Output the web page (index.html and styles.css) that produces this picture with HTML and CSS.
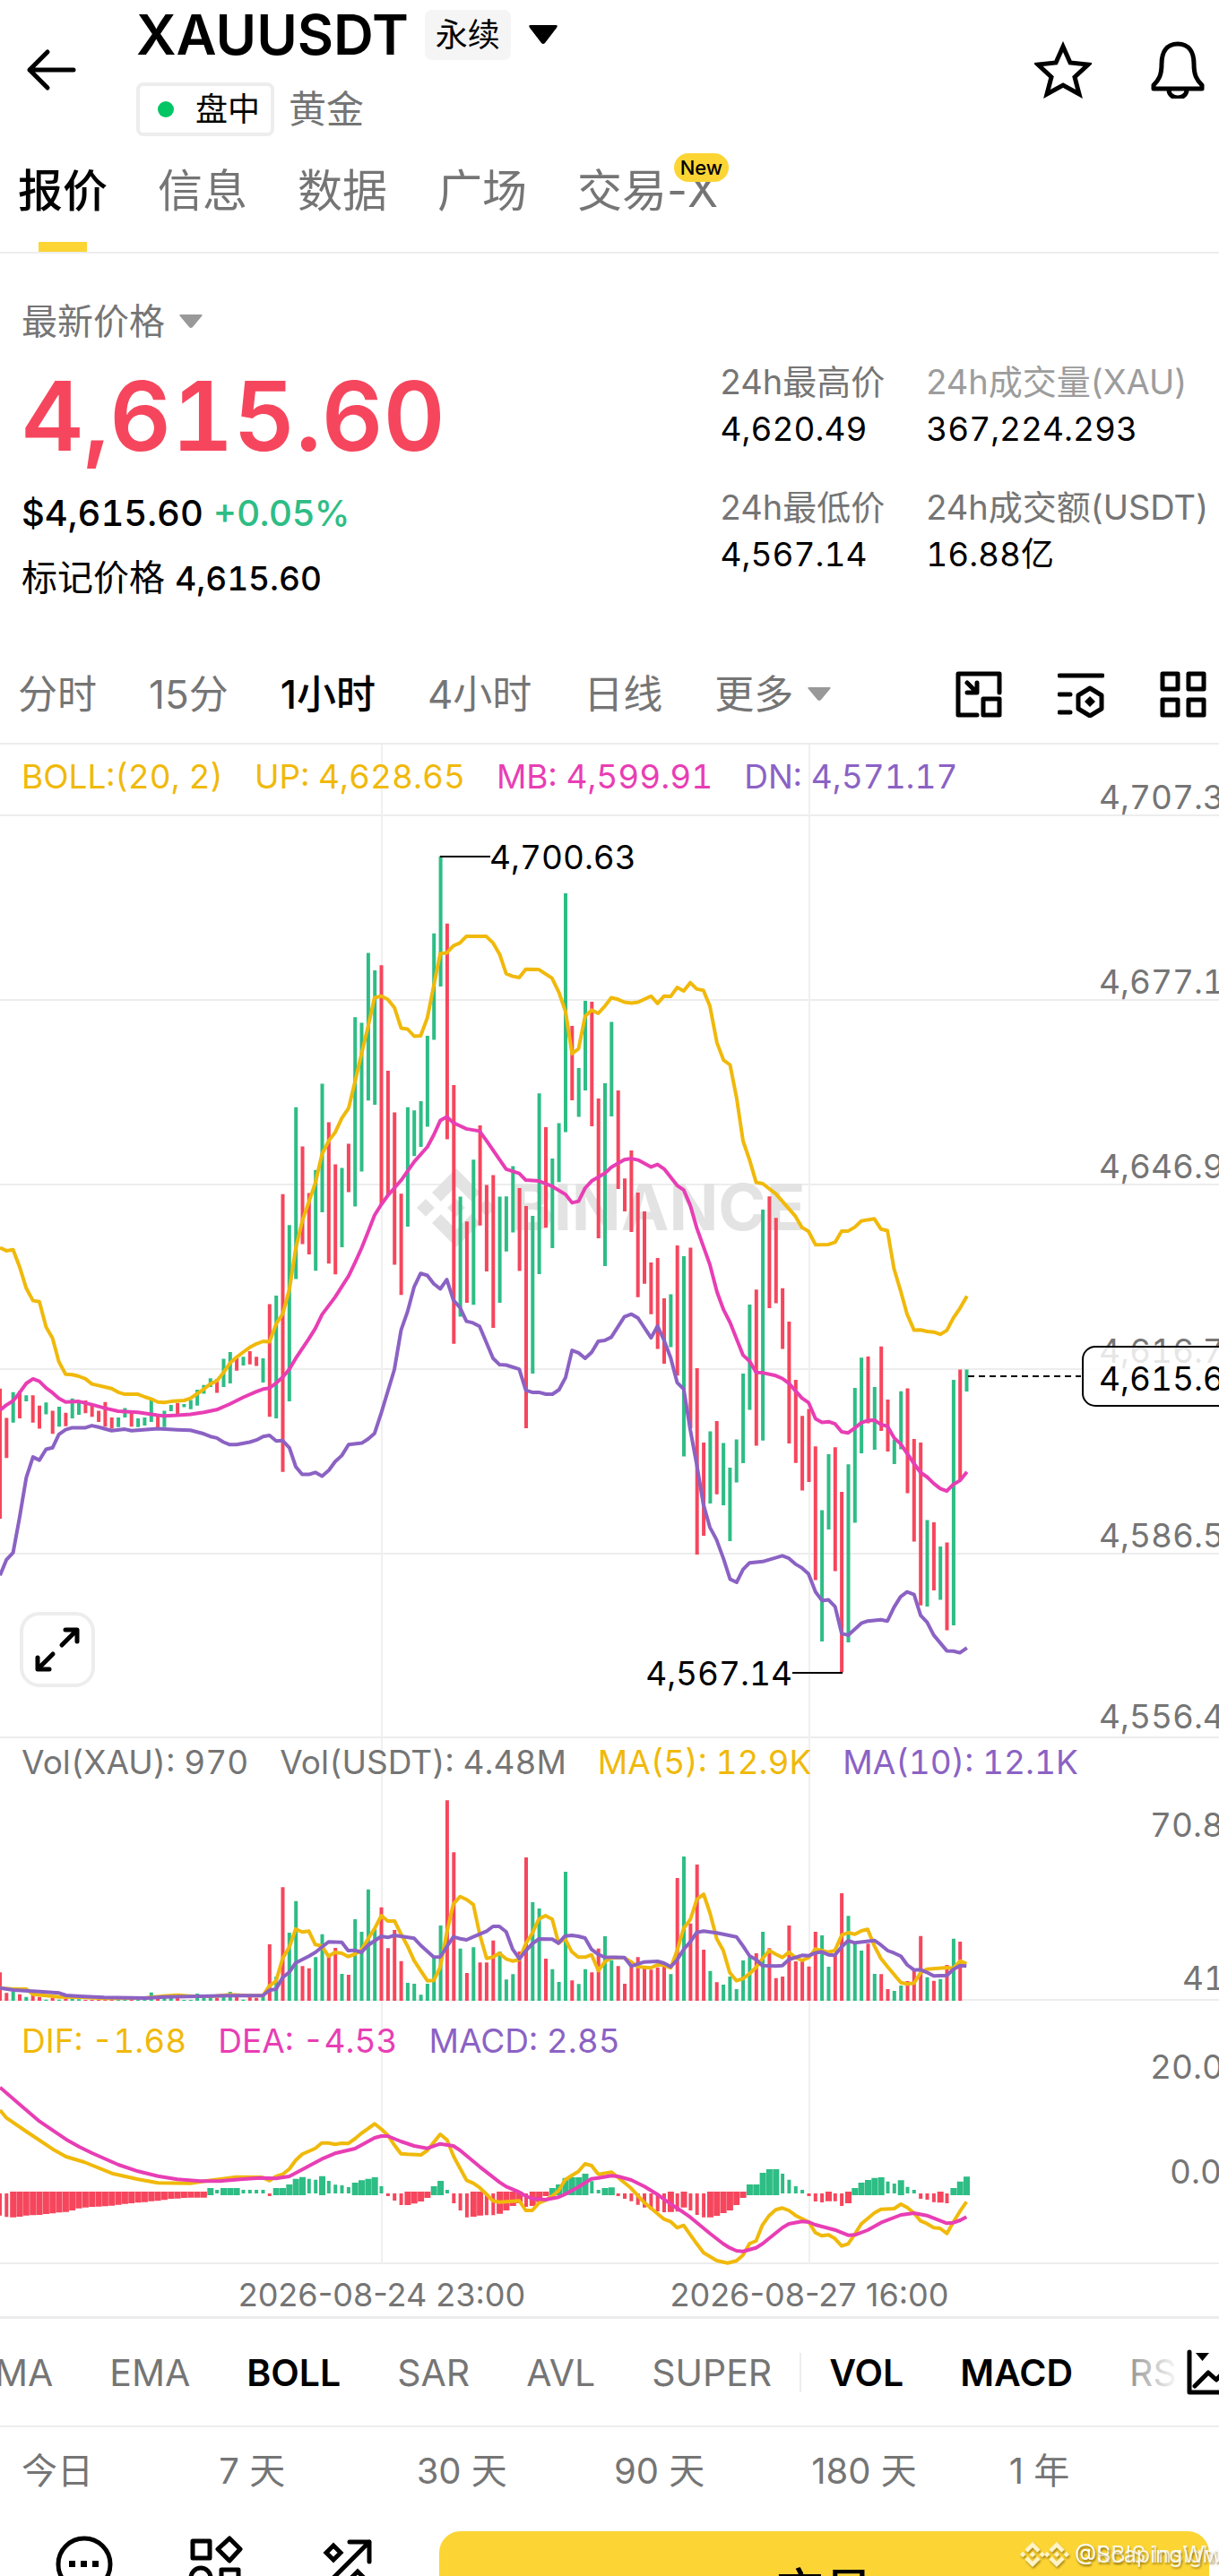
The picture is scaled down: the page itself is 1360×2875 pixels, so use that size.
FILE: index.html
```html
<!DOCTYPE html>
<html lang="zh-CN">
<head>
<meta charset="utf-8">
<meta name="viewport" content="width=device-width, initial-scale=1">
<title>XAUUSDT 永续</title>
<link rel="stylesheet" href="styles.css">
</head>
<body>
<svg width="0" height="0" class="defs" aria-hidden="true">
  <symbol id="brand" viewBox="0 0 24 24"><path d="M16.624 13.9202l2.7175 2.7154-7.353 7.353-7.353-7.352 2.7175-2.7164 4.6355 4.6595 4.6356-4.6595zm4.6366-4.6366L24 12l-2.7154 2.7164L18.5682 12l2.6924-2.7164zm-9.272.001l2.7163 2.6914-2.7164 2.7174v-.001L9.2721 12l2.7164-2.7154zm-9.2722-.001L5.4088 12l-2.6914 2.6924L0 12l2.7164-2.7164zM11.9885.0115l7.353 7.329-2.7174 2.7154-4.6356-4.6356-4.6355 4.6595-2.7174-2.7154 7.353-7.353z"/></symbol>
</svg>
<div class="app">
  <header class="header">
    <button class="icon-btn back" aria-label="返回">
      <svg width="60" height="48" viewBox="0 0 60 48" class="line"><path d="M25 4 5 24l20 20M5 24h49"/></svg>
    </button>
    <div class="pair">
      <div class="pair-top">
        <h1 class="symbol">XAUUSDT</h1>
        <span class="tag">永续</span>
        <button class="icon-btn" aria-label="切换交易对"><svg width="32" height="22" viewBox="0 0 32 22"><path d="M2 0h28q3 0 1 3L18 20q-2 2-4 0L1 3q-2-3 1-3z"/></svg></button>
      </div>
      <div class="pair-sub">
        <span class="status"><i class="dot"></i>盘中</span>
        <span class="alias">黄金</span>
      </div>
    </div>
    <div class="actions">
      <button class="icon-btn" aria-label="收藏"><svg width="64" height="64" viewBox="0 0 64 64" class="line miter"><path d="M32 6l8 18 20 2-15 14 5 19-18-10-18 10 5-19L4 26l20-2z"/></svg></button>
      <button class="icon-btn" aria-label="提醒"><svg width="64" height="64" viewBox="0 0 64 64" class="line"><path d="M32 3C19 3 14 13 14 25c0 13-3 18-9 24v4h54v-4c-6-6-9-11-9-24C50 13 45 3 32 3z"/><path d="M22 54c0 12 20 12 20 0"/></svg></button>
    </div>
  </header>

  <nav class="tabs">
    <a href="#quote" class="tab active">报价</a>
    <a href="#info" class="tab">信息</a>
    <a href="#data" class="tab">数据</a>
    <a href="#square" class="tab">广场</a>
    <a href="#tradex" class="tab">交易-X<span class="new">New</span></a>
  </nav>

  <section class="quote">
    <div class="quote-main">
      <button class="price-type">最新价格 <svg width="26" height="16" viewBox="0 0 26 16"><path d="M2 0h22q3 0 1 2L15 14q-2 2-4 0L1 2q-2-2 1-2z"/></svg></button>
      <div class="price">4,615.60</div>
      <div class="fiat">$4,615.60 <span class="up">+0.05%</span></div>
      <div class="mark">标记价格 <span class="mark-num">4,615.60</span></div>
    </div>
    <dl class="stats">
      <div class="stat"><dt>24h最高价</dt><dd>4,620.49</dd></div>
      <div class="stat"><dt class="pale">24h成交量(XAU)</dt><dd>367,224.293</dd></div>
      <div class="stat"><dt>24h最低价</dt><dd>4,567.14</dd></div>
      <div class="stat"><dt>24h成交额(USDT)</dt><dd>16.88亿</dd></div>
    </dl>
  </section>

  <div class="intervals">
    <button class="interval">分时</button>
    <button class="interval">15分</button>
    <button class="interval active">1小时</button>
    <button class="interval">4小时</button>
    <button class="interval">日线</button>
    <button class="interval more">更多 <svg width="26" height="16" viewBox="0 0 26 16"><path d="M2 0h22q3 0 1 2L15 14q-2 2-4 0L1 2q-2-2 1-2z"/></svg></button>
    <div class="tools">
      <button class="icon-btn" aria-label="小窗"><svg width="52" height="52" viewBox="0 0 52 52" class="line"><path d="M24 49H3V3h46v21"/><path d="M31 31h18v18H31zM13 13l10 10M24 13v11H13"/></svg></button>
      <button class="icon-btn" aria-label="指标设置"><svg width="52" height="52" viewBox="0 0 52 52" class="line"><path d="M2 5h48M2 26h12M2 46h12M36 19l13 8v15l-13 8-13-8V27z"/><path class="solid" d="M36 28l6 6-6 6-6-6z"/></svg></button>
      <button class="icon-btn" aria-label="布局"><svg width="52" height="52" viewBox="0 0 52 52" class="line"><path d="M3 3h17v17H3zM32 3h17v17H32zM3 32h17v17H3zM32 32h17v17H32z"/></svg></button>
    </div>
  </div>

  <section class="pane pane-price">
    <div class="legend">
      <span class="c-yellow">BOLL:(20, 2)</span><span class="c-yellow">UP: 4,628.65</span><span class="c-pink">MB: 4,599.91</span><span class="c-purple">DN: 4,571.17</span>
    </div>
    <svg id="price" class="chart" viewBox="0 0 1360 1109" role="img" aria-label="K线图"></svg>
    <button class="expand" aria-label="全屏"><svg width="50" height="50" viewBox="0 0 50 50" class="line"><path d="M30 20 46 4M34 3h13v13M20 30 4 46M3 34v13h13"/></svg></button>
  </section>
  <section class="pane">
    <div class="legend">
      <span>Vol(XAU): 970</span><span>Vol(USDT): 4.48M</span><span class="c-yellow">MA(5): 12.9K</span><span class="c-purple">MA(10): 12.1K</span>
    </div>
    <svg id="volume" class="chart" viewBox="0 0 1360 293" role="img" aria-label="成交量"></svg>
  </section>
  <section class="pane">
    <div class="legend legend-macd">
      <span class="c-yellow">DIF: -1.68</span><span class="c-pink">DEA: -4.53</span><span class="c-purple">MACD: 2.85</span>
    </div>
    <svg id="macd" class="chart" viewBox="0 0 1360 352" role="img" aria-label="MACD"></svg>
  </section>

  <div class="indicators">
    <div class="indicator-list">
      <button class="ind">MA</button>
      <button class="ind">EMA</button>
      <button class="ind active">BOLL</button>
      <button class="ind">SAR</button>
      <button class="ind">AVL</button>
      <button class="ind">SUPER</button>
      <span class="sep"></span>
      <button class="ind active">VOL</button>
      <button class="ind active">MACD</button>
      <button class="ind">RSI</button>
    </div>
    <button class="icon-btn ind-more" aria-label="更多指标"><svg width="56" height="52" viewBox="0 0 56 52" class="line"><path d="M3 3v45h50M9 41l15-15 9 8 16-17"/><path class="fill" d="M10 4h15l-7.500 9z"/></svg></button>
  </div>

  <div class="ranges">
    <button class="range">今日</button>
    <button class="range">7 天</button>
    <button class="range">30 天</button>
    <button class="range">90 天</button>
    <button class="range">180 天</button>
    <button class="range">1 年</button>
  </div>

  <footer class="bottom">
    <div class="shortcuts">
      <button class="icon-btn" aria-label="聊天"><svg width="64" height="64" viewBox="0 0 64 64" class="line"><circle cx="32" cy="32" r="29"/><path class="fill" d="M15 28h7v7h-7zM28 28h7v7h-7zM41 28h7v7h-7z"/></svg></button>
      <button class="icon-btn" aria-label="功能"><svg width="64" height="64" viewBox="0 0 64 64" class="line"><path d="M5 6h19v19H5zM46 3l12 12-12 13-13-13zM37 38h19v19H37z"/><circle cx="14" cy="47" r="11"/></svg></button>
      <button class="icon-btn" aria-label="合约"><svg width="64" height="64" viewBox="0 0 64 64" class="line"><path d="M32 7h22v22M54 7 5 56"/><path class="miter" d="M14 11l8 8-8 8-8-8zM41 40l8 8-8 8-8-8z"/></svg></button>
    </div>
    <button class="trade">交易</button>
    <div class="credit" aria-hidden="true">
      <span class="credit-line first"><svg width="28" height="28"><use href="#brand"/></svg><span>@RBIS Insight</span></span>
      <span class="credit-line second"><svg width="28" height="28"><use href="#brand"/></svg><span>@ScapingWw</span></span>
    </div>
  </footer>
</div>
<script src="chart.js"></script>
</body>
</html>
```

FILE: styles.css
```css
* { box-sizing: border-box; }

body {
  margin: 0;
  background: #fff;
  color: #000;
  font-family: Inter, "Noto Sans CJK SC", sans-serif;
}

button {
  margin: 0;
  padding: 0;
  border: 0;
  background: none;
  color: inherit;
  font: inherit;
  white-space: nowrap;
}

a { color: inherit; text-decoration: none; }
svg { display: block; }

.defs { position: absolute; }

.app {
  position: relative;
  height: 100vh;
  overflow: hidden;
}

.line {
  fill: none;
  stroke: #000;
  stroke-width: 5;
  stroke-linecap: round;
  stroke-linejoin: round;
}
.line.miter, .line .miter { stroke-linejoin: miter; }
.line .fill { fill: #000; stroke: none; }
.line .solid { fill: #000; stroke: none; }

/* Header */
.header {
  display: flex;
  align-items: center;
  padding: 3px 14px 0 28px;
}
.pair { margin-left: 64px; padding-top: 8px; }
.pair-top, .pair-sub { display: flex; align-items: center; }
.pair-top { height: 56px; }
.symbol {
  margin: 0;
  font-size: 62px;
  font-weight: 600;
  line-height: 58px;
}
.tag {
  margin: 0 20px 0 18px;
  padding: 0 12px;
  border-radius: 8px;
  background: #f5f5f5;
  font-size: 36px;
  line-height: 56px;
}
.pair-sub { margin-top: 25px; gap: 16px; }
.status {
  display: flex;
  align-items: center;
  gap: 24px;
  padding: 0 12px 0 20px;
  border: 4px solid #ededed;
  border-radius: 8px;
  font-size: 36px;
  line-height: 52px;
}
.dot { width: 18px; height: 18px; border-radius: 50%; background: #02c564; }
.alias { color: #757575; font-size: 42px; line-height: 60px; }
.actions { display: flex; gap: 64px; margin-left: auto; }

/* Tabs */
.tabs {
  display: flex;
  gap: 56px;
  padding: 30px 20px 0;
  border-bottom: 2px solid #ededed;
}
.tab {
  position: relative;
  height: 99px;
  color: #757575;
  font-size: 50px;
  line-height: 62px;
}
.tab.active { color: #000; font-weight: 500; }
.tab.active::after {
  content: "";
  position: absolute;
  left: 50%;
  bottom: 0;
  width: 54px;
  height: 11px;
  margin-left: -27px;
  background: #fcd535;
}
.new {
  position: absolute;
  right: -12px;
  top: -11px;
  padding: 0 7px;
  border-radius: 16px;
  background: #fcd535;
  color: #000;
  font-size: 22px;
  font-weight: 500;
  line-height: 32px;
}

/* Quote */
.quote {
  display: flex;
  justify-content: space-between;
  padding: 52px 12px 51px 24px;
}
.price-type {
  display: flex;
  align-items: center;
  gap: 16px;
  color: #757575;
  font-size: 40px;
  line-height: 48px;
}
.price-type svg, .more svg { fill: #999; }
.price, .fiat, .mark-num, .stat dd, .legend, .chart { font-variant-numeric: tabular-nums; }
.price {
  margin-top: 26px;
  color: #f6465d;
  font-size: 107px;
  font-weight: 600;
  line-height: 110px;
}
.fiat {
  margin-top: 29px;
  font-size: 40px;
  font-weight: 500;
  line-height: 50px;
}
.up { color: #2ebd85; font-variant-numeric: normal; }
.mark {
  margin-top: 23px;
  font-size: 40px;
  line-height: 48px;
}
.mark-num { font-size: 37px; font-weight: 500; }
.stats {
  display: grid;
  grid-template-columns: auto auto;
  gap: 41px 46px;
  margin: 68px 0 0;
  align-content: start;
  font-size: 38px;
  line-height: 46px;
}
.stat { display: flex; flex-direction: column; gap: 7px; }
.stat dt { color: #757575; }
.stat .pale { color: #9c9c9c; }
.stat dd { margin: 0; font-size: 37px; }

/* Intervals */
.intervals {
  display: flex;
  align-items: center;
  gap: 58px;
  height: 108px;
  padding: 0 14px 0 20px;
}
.interval {
  color: #757575;
  font-size: 44px;
  line-height: 54px;
}
.interval.active { color: #000; font-weight: 500; }
.more { display: flex; align-items: center; gap: 16px; }
.tools { display: flex; gap: 62px; margin-left: auto; }

/* Chart panes */
.pane { position: relative; }
.pane-price { border-top: 2px solid #ededed; }
.legend {
  position: absolute;
  left: 24px;
  top: 4px;
  z-index: 1;
  display: flex;
  gap: 35px;
  color: #757575;
  font-size: 37px;
  line-height: 46px;
  white-space: nowrap;
}
.pane-price .legend { top: 13px; }
.legend-macd { top: 22px; }
.chart { width: 100%; height: auto; font-size: 37px; overflow: hidden; }
.c-yellow { color: #f0b90b; }
.c-pink { color: #e83eb4; }
.c-purple { color: #8b62c4; }
.expand {
  position: absolute;
  left: 22px;
  bottom: 57px;
  display: flex;
  align-items: center;
  justify-content: center;
  width: 84px;
  height: 84px;
  border: 4px solid #ededed;
  border-radius: 22px;
  background: #fff;
}

.grid { stroke: #ededed; stroke-width: 2; fill: none; }
.vgrid { stroke: #f0f0f0; stroke-width: 2; fill: none; }
.curve { fill: none; stroke-width: 4; stroke-linejoin: round; }
.curve.yellow { stroke: #f0b90b; }
.curve.pink { stroke: #e83eb4; }
.curve.purple { stroke: #8b62c4; }
.rise { fill: #2ebd85; }
.fall { fill: #f6465d; }
.axis { fill: #757575; }
.date { fill: #757575; font-size: 36px; font-variant-numeric: normal; }
.note { fill: #000; }
.leader { stroke: #000; stroke-width: 2; }
.dash { stroke: #000; stroke-width: 2; stroke-dasharray: 7 5; }
.last { fill: #fff; fill-opacity: .82; stroke: #000; stroke-width: 2; }
.brand { fill: #e3e3e3; }
.brand-name { fill: #e3e3e3; font-size: 72px; font-weight: 700; }

/* Indicators */
.indicators {
  display: flex;
  align-items: center;
  height: 124px;
  border-top: 3px solid #ededed;
  border-bottom: 2px solid #ededed;
  overflow: hidden;
}
.indicator-list {
  position: relative;
  display: flex;
  flex: 1;
  align-items: center;
  gap: 63px;
  min-width: 0;
  margin-left: -6px;
  overflow: hidden;
}
.indicator-list::after {
  content: "";
  position: absolute;
  top: 0;
  right: 0;
  bottom: 0;
  width: 80px;
  background: linear-gradient(to right, rgba(255, 255, 255, 0), #fff 90%);
}
.ind { color: #757575; font-size: 41px; line-height: 50px; }
.ind.active { color: #000; font-weight: 600; }
.sep { width: 2px; height: 44px; margin: 0 -32px; background: #ededed; }
.ind-more { width: 36px; }

/* Ranges */
.ranges {
  display: grid;
  grid-template-columns: repeat(6, 1fr);
  height: 98px;
  padding: 0 14px 0 24px;
  align-items: center;
}
.range { color: #757575; font-size: 40px; line-height: 50px; text-align: left; }

/* Bottom bar */
.bottom {
  position: relative;
  display: flex;
  align-items: flex-start;
  gap: 68px;
  padding: 18px 11px 40px 62px;
}
.shortcuts { display: flex; gap: 84px; padding-top: 5px; }
.trade {
  flex: 1;
  padding: 36px 0;
  border-radius: 24px;
  background: #fcd535;
  font-size: 54px;
  font-weight: 500;
  line-height: 64px;
}
.credit {
  position: absolute;
  right: 6px;
  top: 26px;
  display: grid;
  width: 216px;
  color: rgba(255, 255, 255, .85);
  font-size: 25px;
  line-height: 36px;
}
.credit-line {
  display: flex;
  align-items: center;
  grid-area: 1 / 1;
  white-space: nowrap;
  filter: drop-shadow(1px 2px 1px rgba(120, 90, 0, .6));
}
.first { justify-content: space-between; }
.second { gap: 6px; margin-left: 27px; }
.credit svg { fill: #fff3c8; }
```

FILE: chart.js
```js
(function () {
  var NS = 'http://www.w3.org/2000/svg';
  var STEP = 7.337;

  function add(svg, tag, attrs, text) {
    var el = document.createElementNS(NS, tag);
    for (var k in attrs) el.setAttribute(k, attrs[k]);
    if (text !== undefined) el.textContent = text;
    svg.appendChild(el);
    return el;
  }
  function r(n) { return Math.round(n * 10) / 10; }

  // A point list "x,y x,y ..." stored in its own units, mapped to the pane.
  function points(list, kx, ox, ky, oy) {
    return list.trim().split(/\s+/).map(function (p) {
      var q = p.split(',');
      return r(q[0] * kx + ox) + ',' + r(q[1] * ky + oy);
    }).join(' ');
  }
  function curve(svg, name, parts) {
    add(svg, 'polyline', { 'class': 'curve ' + name, points: parts.join(' ') });
  }
  function bar(x, top, bottom, w) {
    return 'M' + r(x - w / 2) + ' ' + r(top) + 'h' + w + 'V' + r(bottom) + 'h-' + w + 'z';
  }
  function vgrid(svg, h) {
    add(svg, 'path', { 'class': 'vgrid', d: 'M426 0V' + h + 'M903 0V' + h });
  }

  /* ---- price ---- */
  var early = 'r1165-1418 r1222-1300 g1172-1231 r1170-1223 g1178-1190 r1178-1231 r1198-1243 g1192-1215 r1208-1253 g1200-1239 ' +
    'r1212-1238 g1184-1223 g1188-1216 r1188-1213 r1195-1220 r1208-1230 r1191-1239 r1221-1243 g1221-1240 g1203-1221 ' +
    'r1212-1239 g1223-1240 g1221-1237 g1185-1230 r1219-1243 g1208-1240 g1197-1209 r1193-1215 g1195-1201 g1187-1205 ' +
    'g1167-1198 g1158-1175 g1145-1162 r1146-1173 g1107-1162 g1094-1155 r1105-1130 g1103-1120 r1092-1118 r1103-1121 ' +
    'g1106-1153 r1001-1220 g984-1223 r787-1327 g847-1190 g618-952 r694-884 r785-904 g740-936 g572-822 ' +
    'r647-922 r729-943 g736-890 r689-783 g443-811 g454-743 g318-605 g352-613 r342-808 r547-790 ' +
    'r628-924 r786-983 g618-850 g624-713 g606-695 g479-656 g280-487 g130-383 r261-680 r575-1078 ' +
    'g792-1025 r840-998 g720-1002 r653-848 r769-937 r750-1047 g792-998';
  var late = 'g1272-1444 g1177-1385 r1246-1505 r1302-1996 g1333-1826 g950-1515 r1056-1370 g1154-1434 g1043-1227 g325-1071 ' +
    'r739-972 g871-1023 g661-941 r664-1053 r966-1403 g918-1490 g727-1022 r941-1249 r1216-1319 r1128-1383 ' +
    'r1260-1587 r1319-1545 r1478-1640 r1464-1749 r1590-1795 g1578-1743 r1425-1832 g1459-2085 r1432-1996 r1809-2391 ' +
    'r2041-2332 g2006-2232 r1974-2203 g2043-2237 g2120-2349 g2031-2166 g1826-2106 g1610-1939 r1563-2051 g1313-2035 ' +
    'r1272-1621 r1339-1606 r1559-1749 r1663-2044 r1845-2105 r1958-2191 r1936-2164 r2053-2471 g2253-2663 g2078-2313 ' +
    'r2056-2443 r2195-2759 g2109-2666 g1870-2292 g1776-2075 r1772-1981 g1868-2064 r1741-2005 r1907-2069 g2031-2108 ' +
    'g1881-2062 r1872-2199 r2030-2351 r2041-2550 g2283-2554 r2290-2503 g2366-2533 r2353-2628 g1845-2612 r1813-2156 g1813-1882';

  function parse(list, ky) {
    return list.split(' ').map(function (s) {
      var p = s.slice(1).split('-');
      return { up: s[0] === 'g', top: p[0] * ky + 50, bottom: p[1] * ky + 50 };
    });
  }
  var candles = parse(early, 1 / 1.742).concat(parse(late, 1 / 2.8));

  var price = document.getElementById('price');
  var rows = [79, 285, 491, 697, 903];
  add(price, 'path', { 'class': 'grid', d: rows.map(function (y) { return 'M0 ' + y + 'H1360'; }).join('') + 'M0 1108H1360' });
  vgrid(price, 1109);
  add(price, 'use', { href: '#brand', 'class': 'brand', x: 465, y: 473, width: 88, height: 88 });
  add(price, 'text', { 'class': 'brand-name', x: 570, y: 542 }, 'BINANCE');

  var d = { rise: '', fall: '' };
  candles.forEach(function (c, i) { d[c.up ? 'rise' : 'fall'] += bar(i * STEP, c.top, c.bottom, 4); });
  add(price, 'path', { 'class': 'rise', d: d.rise });
  add(price, 'path', { 'class': 'fall', d: d.fall });

  function pa(list) { return points(list, 1 / 2.8, 0, 1 / 1.742, 50); }
  function pb(list) { return points(list, 1 / 1.782, 480, 1 / 2.8, 50); }

  curve(price, 'yellow', [
    pa('0,891 20,897 41,895 61,928 82,970 103,994 123,996 144,1045 164,1067 184,1113 205,1137 226,1138 246,1141 267,1146 287,1156 349,1165 369,1172 390,1176 431,1176 452,1181 472,1185 493,1191 513,1192 534,1190 554,1189 575,1188 595,1184 616,1175 637,1166 657,1156 677,1150 698,1134 718,1116 739,1104 760,1094 780,1085 801,1078 822,1073 842,1074 863,1039 883,1020 904,972 924,892 944,840 965,802 985,765 1006,709 1027,683 1047,667 1068,639 1089,620 1109,568 1130,512 1150,461 1170,405 1191,402 1211,408 1232,424 1253,464 1273,466 1294,480 1314,479 1335,444 1355,382'),
    pb('20,513 33,511 46,489 59,480 72,459 111,459 125,480 138,515 151,576 164,584 177,588 190,562 216,563 242,590 256,635 269,695 282,826 295,810 308,709 321,690 334,700 347,678 360,651 373,656 386,665 400,668 413,665 439,646 452,669 465,646 478,647 491,619 504,630 517,604 530,624 543,628 556,677 570,792 583,846 596,861 609,964 622,1099 635,1158 648,1228 661,1232 687,1264 726,1334 739,1369 752,1381 766,1423 792,1422 805,1415 818,1380 831,1380 844,1368 857,1349 870,1345 883,1342 896,1374 909,1379 922,1498 935,1566 948,1640 962,1690 975,1689 988,1694 1001,1696 1014,1703 1027,1691 1040,1652 1053,1622 1067,1583')
  ]);
  curve(price, 'purple', [
    pa('0,1528 20,1498 41,1484 61,1416 82,1338 103,1298 123,1304 144,1283 164,1280 184,1254 205,1245 226,1241 267,1241 287,1237 308,1240 349,1247 390,1244 411,1247 493,1243 554,1245 595,1246 637,1253 657,1258 677,1261 698,1269 718,1274 739,1274 780,1269 801,1265 822,1258 842,1256 863,1267 883,1266 904,1280 924,1317 944,1332 965,1332 985,1328 1006,1335 1027,1324 1047,1307 1068,1295 1089,1274 1130,1271 1150,1263 1170,1252 1191,1212 1232,1128 1253,1051 1273,1016 1294,967 1314,941 1335,945 1355,961'),
    pb('20,1561 33,1532 46,1596 59,1619 72,1662 85,1667 98,1678 125,1778 138,1798 151,1799 177,1812 190,1878 203,1884 216,1884 230,1890 243,1890 256,1876 269,1838 282,1753 295,1761 308,1778 321,1759 334,1725 347,1722 360,1712 386,1648 400,1640 413,1652 439,1714 452,1677 465,1722 478,1776 491,1854 504,1874 517,2001 530,2111 543,2234 556,2306 569,2344 583,2404 596,2468 609,2478 622,2438 635,2417 661,2413 700,2395 713,2403 726,2421 739,2433 752,2451 766,2508 779,2535 792,2533 805,2554 818,2638 831,2643 857,2606 870,2599 896,2595 909,2599 922,2556 935,2523 948,2508 962,2516 975,2581 988,2603 1001,2643 1027,2692 1040,2693 1053,2698 1067,2683')
  ]);
  curve(price, 'pink', [
    pa('0,1207 20,1197 41,1189 61,1173 82,1155 103,1146 123,1151 144,1164 164,1173 184,1184 205,1191 246,1190 287,1196 328,1203 369,1209 431,1211 493,1217 513,1218 554,1217 595,1215 637,1211 677,1206 718,1195 760,1182 801,1171 822,1166 842,1164 863,1154 883,1143 904,1127 924,1106 965,1068 985,1048 1006,1021 1047,987 1089,946 1109,920 1130,891 1150,860 1170,828 1191,807 1211,790 1253,760 1294,724 1335,695 1355,672'),
    pb('20,1035 33,1023 46,1042 72,1061 98,1068 111,1096 151,1187 177,1200 190,1221 216,1224 243,1241 269,1266 282,1292 295,1287 308,1246 321,1224 347,1200 360,1181 386,1157 400,1154 413,1158 439,1180 452,1172 465,1186 491,1238 504,1252 517,1300 530,1371 556,1485 570,1570 583,1626 596,1666 622,1768 635,1787 648,1822 661,1823 687,1832 700,1841 713,1856 739,1902 752,1916 766,1967 779,1978 792,1976 805,1983 818,2008 831,2011 844,1996 857,1979 870,1972 883,1971 896,1985 909,1990 922,2026 935,2045 962,2107 975,2135 988,2149 1001,2169 1014,2185 1027,2193 1040,2172 1053,2160 1067,2133')
  ]);

  [['4,707.3', 72], ['4,677.1', 278], ['4,646.9', 484], ['4,616.7', 690], ['4,586.5', 896], ['4,556.4', 1098]].forEach(function (t) {
    add(price, 'text', { 'class': 'axis', x: 1226, y: t[1] }, t[0]);
  });
  add(price, 'path', { 'class': 'leader', d: 'M491 125H547M884 1036H940' });
  add(price, 'text', { 'class': 'note', x: 546, y: 139 }, '4,700.63');
  add(price, 'text', { 'class': 'note', x: 884, y: 1050, 'text-anchor': 'end' }, '4,567.14');
  add(price, 'path', { 'class': 'dash', d: 'M1080 705H1206' });
  add(price, 'rect', { 'class': 'last', x: 1208, y: 672, width: 180, height: 66, rx: 14 });
  add(price, 'text', { 'class': 'note', x: 1226, y: 721 }, '4,615.6');

  /* ---- volume ---- */
  var vols = [95, 26, 31, 22, 13, 21, 13, 4, 10, 4, 8, 10, 5, 3, 3, 3, 3, 6, 3, 3, 6, 3, 3, 28, 11, 12, 13, 12, 3, 3,
    24, 14, 12, 10, 14, 30, 13, 4, 21, 10, 16, 189, 81, 380, 228, 334, 116, 109, 146, 223, 149, 177, 90, 87, 273, 231, 373, 239, 313, 176,
    237, 133, 60, 57, 20, 57, 149, 252, 671, 497, 175, 93, 179, 128, 128, 202, 165, 71, 89, 165, 480, 330, 309, 141, 106, 63, 432, 68, 56, 106,
    95, 175, 216, 136, 116, 57, 116, 146, 114, 104, 112, 116, 89, 411, 483, 259, 456, 171, 100, 62, 54, 81, 39, 135, 146, 159, 231, 176, 76, 81,
    252, 132, 132, 115, 231, 219, 114, 154, 360, 284, 194, 168, 191, 90, 89, 39, 33, 51, 66, 104, 217, 79, 67, 73, 120, 208, 198];
  var volume = document.getElementById('volume');
  add(volume, 'path', { 'class': 'grid', d: 'M0 292H1360' });
  vgrid(volume, 293);
  d = { rise: '', fall: '' };
  vols.forEach(function (v, i) { d[candles[i].up ? 'rise' : 'fall'] += bar(i * STEP, 293 - v / 3, 293, 4); });
  add(volume, 'path', { 'class': 'rise', d: d.rise });
  add(volume, 'path', { 'class': 'fall', d: d.fall });
  function va(list) { return points(list, 1 / 2.24, 0, 1 / 3, -199); }
  function vb(list) { return points(list, 1 / 2.24, 660, 1 / 3, -19); }
  curve(volume, 'yellow', [
    va('0,1433 33,1437 66,1437 82,1454 115,1459 148,1463 200,1464 260,1468 330,1467 365,1466 410,1460 443,1457 480,1461 540,1460 575,1456 620,1459 657,1459 673,1427 690,1410 706,1335 723,1296 739,1236 755,1246 772,1243 788,1288 804,1292 821,1327 837,1314 854,1317 870,1328 887,1320 903,1306 920,1268 936,1235 953,1191 969,1209 986,1209 1002,1252 1018,1292 1035,1342 1068,1409 1084,1408 1100,1364 1117,1245 1133,1152 1150,1127 1166,1137 1183,1154 1199,1255 1216,1334 1232,1330 1248,1317 1265,1336 1281,1343 1298,1338 1314,1285 1330,1250 1347,1202 1363,1191 1380,1203 1396,1283 1412,1268 1429,1312 1445,1330 1462,1330'),
    vb('0,782 17,835 33,806 50,791 82,792 99,806 115,822 148,826 165,815 181,817 198,826 214,767 230,694 247,663 263,597 280,579 296,642 313,729 329,767 345,841 362,869 378,862 395,845 411,824 427,795 444,768 460,780 477,791 493,773 510,792 526,801 543,791 559,763 592,773 608,768 625,716 641,708 658,713 674,702 690,697 707,753 723,794 740,823 773,875 789,880 806,877 822,842 838,830 888,825 904,827 921,803 937,812')
  ]);
  curve(volume, 'purple', [
    va('0,1433 33,1440 99,1445 148,1450 165,1458 200,1461 260,1465 365,1467 410,1463 500,1461 575,1459 657,1459 673,1441 690,1437 706,1399 723,1380 739,1349 772,1327 788,1314 821,1279 854,1280 870,1308 887,1307 903,1314 920,1290 953,1260 969,1264 986,1257 1035,1267 1051,1290 1084,1330 1100,1329 1117,1294 1133,1262 1150,1268 1166,1272 1183,1262 1216,1243 1232,1227 1248,1227 1265,1245 1281,1303 1298,1335 1314,1309 1330,1285 1347,1269 1380,1270 1396,1283 1412,1259 1429,1257 1445,1260 1462,1266'),
    vb('0,764 17,781 33,790 82,791 99,820 132,806 165,804 181,810 198,822 214,799 230,764 247,738 263,707 280,703 313,709 362,722 378,752 395,786 411,798 427,818 460,820 477,818 493,798 526,784 543,785 559,776 575,772 592,782 608,784 625,755 641,735 658,742 707,734 723,749 740,768 756,776 773,787 789,816 806,833 822,832 838,841 855,853 888,851 904,831 921,818 937,820')
  ]);
  add(volume, 'text', { 'class': 'axis', x: 1283, y: 110 }, '70.8');
  add(volume, 'text', { 'class': 'axis', x: 1319, y: 281 }, '41');

  /* ---- MACD: "w" marks a solid (wide) bar ---- */
  var hist = ('755 760 w761 w759 w755 w754 w753 w750 w748 w745 w743 w738 w731 w728 w726 w725 w724 w722 w719 w716 ' +
    'w714 w712 w710 w707 w706 w703 w699 w698 w696 w695 w695 w695 w663 669 w663 w663 w663 669 669 669 ' +
    '669 690 w663 w663 w651 w632 w626 632 635 w623 639 652 654 660 w645 w637 w632 w627 657 690 ' +
    '705 720 w720 w715 w708 w696 w657 w639 669 714 738 761 w759 w755 754 754 w749 w738 w723 w714 ' +
    '726 w723 w710 w690 w663 w651 w629 w627 w627 w615 640 669 w663 w661 690 699 707 719 728 735 ' +
    '741 744 w743 742 w728 738 753 761 w761 w756 w747 w738 w720 w696 w651 w651 w612 w600 w600 615 ' +
    '635 657 669 690 708 711 w707 707 723 w714 w663 w645 w636 w629 w627 641 648 w637 659 669 ' +
    '699 702 710 w712 714 w663 w641 w625').split(' ');
  var macd = document.getElementById('macd');
  add(macd, 'path', { 'class': 'grid', d: 'M0 293H1360' });
  vgrid(macd, 293);
  d = { rise: '', fall: '' };
  hist.forEach(function (s, i) {
    var wide = s[0] === 'w';
    var v = +s.replace('w', '') / 3 - 12;
    if (v < 214) d.rise += bar(i * STEP, v, wide ? 217 : 215, wide ? 7 : 4);
    else d.fall += bar(i * STEP, wide ? 213 : 215, v, wide ? 7 : 4);
  });
  add(macd, 'path', { 'class': 'rise', d: d.rise });
  add(macd, 'path', { 'class': 'fall', d: d.fall });
  function ma(list) { return points(list, 1 / 2.24, 0, 1 / 3, -12); }
  function mb(list) { return points(list, 1 / 2.24, 660, 1 / 3, -12); }
  curve(macd, 'yellow', [
    ma('0,402 15,427 66,474 132,533 165,558 210,576 280,614 345,634 395,646 476,647 520,638 590,626 655,627 673,638 690,624 706,617 723,599 739,570 755,550 788,530 804,512 821,512 837,517 854,513 870,514 887,498 903,480 920,464 936,448 953,466 969,486 986,520 1002,548 1018,550 1052,552 1068,537 1084,510 1100,483 1117,502 1133,555 1150,598 1166,637 1183,647 1199,662 1216,684 1232,706 1248,710 1298,706 1314,738 1330,738 1347,713 1363,704 1380,690 1396,672 1412,636 1429,621 1445,608 1462,582'),
    mb('0,588 17,617 50,610 99,664 132,712 181,767 198,776 214,796 230,788 247,820 263,850 280,880 313,906 340,914 362,907 378,888 395,849 411,840 427,787 444,755 460,736 477,730 493,738 510,755 543,777 559,812 575,823 592,820 608,832 625,857 641,850 658,817 674,783 707,746 723,734 756,732 773,717 789,728 806,747 822,773 838,782 855,796 871,798 888,815 904,777 921,740 937,709')
  ]);
  curve(macd, 'pink', [
    ma('0,326 50,384 99,440 132,470 165,500 198,525 230,546 296,585 345,607 395,623 443,634 500,640 550,640 600,634 650,629 690,631 723,624 739,613 804,566 837,547 887,531 936,495 953,489 969,489 1002,507 1035,522 1068,530 1100,515 1133,522 1150,537 1199,592 1248,643 1265,658 1298,677 1314,690 1330,698 1363,702 1396,694 1412,684 1445,660 1478,632'),
    mb('17,629 50,622 66,624 99,636 132,658 165,685 198,717 230,745 247,761 296,815 329,850 345,863 362,873 378,875 411,863 427,850 477,796 493,783 526,775 543,777 559,786 608,803 641,821 658,820 690,804 723,779 773,753 806,747 838,755 888,781 904,779 921,771 937,760')
  ]);
  add(macd, 'text', { 'class': 'axis', x: 1283, y: 87 }, '20.0');
  add(macd, 'text', { 'class': 'axis', x: 1305, y: 204 }, '0.0');
  add(macd, 'text', { 'class': 'date', x: 426, y: 341, 'text-anchor': 'middle' }, '2026-08-24 23:00');
  add(macd, 'text', { 'class': 'date', x: 903, y: 341, 'text-anchor': 'middle' }, '2026-08-27 16:00');
})();
```
